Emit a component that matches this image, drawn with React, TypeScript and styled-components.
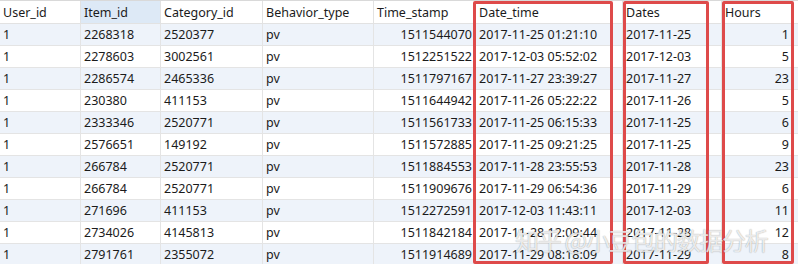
import React from "react";
import styled, { createGlobalStyle } from "styled-components";

const Global = createGlobalStyle`
  html, body { margin: 0; padding: 0; background: #ffffff; }
  body { font-family: "Noto Sans", "Noto Sans CJK SC", sans-serif; }
`;

const Frame = styled.div`
  position: relative;
  width: 798px;
  height: 264px;
  overflow: hidden;
  background: #ffffff;
  border-top: 1px solid #d9d9d9;
  box-sizing: border-box;
`;

const Grid = styled.div`
  display: grid;
  grid-template-columns: 81px 80px 102px 111px 102px 147px 99px 71px 1fr;
`;

const HeadCell = styled.div<{ $active?: boolean }>`
  height: 23px;
  display: flex;
  align-items: center;
  padding: 0 3px;
  box-sizing: border-box;
  font-size: 12.5px;
  color: #1b1b1b;
  background: ${(p) => (p.$active ? "#dde9f6" : "#ffffff")};
  border-right: 1px solid #e2e2e2;
  border-bottom: 1px solid #e2e2e2;
  white-space: nowrap;
`;

const Cell = styled.div<{ $alt: boolean; $right?: boolean }>`
  height: 22px;
  display: flex;
  align-items: center;
  justify-content: ${(p) => (p.$right ? "flex-end" : "flex-start")};
  padding: 0 3px;
  box-sizing: border-box;
  font-size: 12.5px;
  color: #1b1b1b;
  background: ${(p) => (p.$alt ? "#eef3fa" : "#ffffff")};
  border-right: 1px solid #e4e4e4;
  border-bottom: 1px solid #e4e4e4;
  white-space: nowrap;
`;

const Filler = styled.div<{ $alt?: boolean; $head?: boolean }>`
  height: ${(p) => (p.$head ? 23 : 22)}px;
  box-sizing: border-box;
  background: ${(p) => (p.$alt ? "#eef3fa" : "#ffffff")};
  border-bottom: 1px solid #e4e4e4;
`;

const Highlight = styled.div<{ $left: number; $width: number }>`
  position: absolute;
  top: 0px;
  left: ${(p) => p.$left}px;
  width: ${(p) => p.$width}px;
  height: 263px;
  border: 3px solid #de4a4a;
  border-radius: 2px;
  box-sizing: border-box;
  pointer-events: none;
`;

const Watermark = styled.div`
  position: absolute;
  left: 515px;
  top: 221px;
  font-family: "Noto Sans CJK SC", sans-serif;
  font-size: 24px;
  letter-spacing: -1.3px;
  color: rgba(255, 255, 255, 0.8);
  text-shadow: 0 0 1px rgba(80, 80, 80, 0.4), 0 0 1px rgba(80, 80, 80, 0.25);
  white-space: nowrap;
  pointer-events: none;
`;

const headers = [
  "User_id",
  "Item_id",
  "Category_id",
  "Behavior_type",
  "Time_stamp",
  "Date_time",
  "Dates",
  "Hours",
];

const rows: string[][] = [
  ["1", "2268318", "2520377", "pv", "1511544070", "2017-11-25 01:21:10", "2017-11-25", "1"],
  ["1", "2278603", "3002561", "pv", "1512251522", "2017-12-03 05:52:02", "2017-12-03", "5"],
  ["1", "2286574", "2465336", "pv", "1511797167", "2017-11-27 23:39:27", "2017-11-27", "23"],
  ["1", "230380", "411153", "pv", "1511644942", "2017-11-26 05:22:22", "2017-11-26", "5"],
  ["1", "2333346", "2520771", "pv", "1511561733", "2017-11-25 06:15:33", "2017-11-25", "6"],
  ["1", "2576651", "149192", "pv", "1511572885", "2017-11-25 09:21:25", "2017-11-25", "9"],
  ["1", "266784", "2520771", "pv", "1511884553", "2017-11-28 23:55:53", "2017-11-28", "23"],
  ["1", "266784", "2520771", "pv", "1511909676", "2017-11-29 06:54:36", "2017-11-29", "6"],
  ["1", "271696", "411153", "pv", "1512272591", "2017-12-03 11:43:11", "2017-12-03", "11"],
  ["1", "2734026", "4145813", "pv", "1511842184", "2017-11-28 12:09:44", "2017-11-28", "12"],
  ["1", "2791761", "2355072", "pv", "1511914689", "2017-11-29 08:18:09", "2017-11-29", "8"],
];

const rightCols = new Set([4, 7]);

export default function App() {
  return (
    <>
      <Global />
      <Frame>
        <Grid>
          {headers.map((h, i) => (
            <HeadCell key={h} $active={i === 1}>
              {h}
            </HeadCell>
          ))}
          <Filler $head />
          {rows.map((r, ri) => (
            <React.Fragment key={ri}>
              {r.map((v, ci) => (
                <Cell key={ci} $alt={ri % 2 === 0} $right={rightCols.has(ci)}>
                  {v}
                </Cell>
              ))}
              <Filler $alt={ri % 2 === 0} />
            </React.Fragment>
          ))}
        </Grid>
        <Highlight $left={473} $width={140} />
        <Highlight $left={623} $width={86} />
        <Highlight $left={722} $width={72} />
        <Watermark>知乎 @小豆包的数据分析</Watermark>
      </Frame>
    </>
  );
}
